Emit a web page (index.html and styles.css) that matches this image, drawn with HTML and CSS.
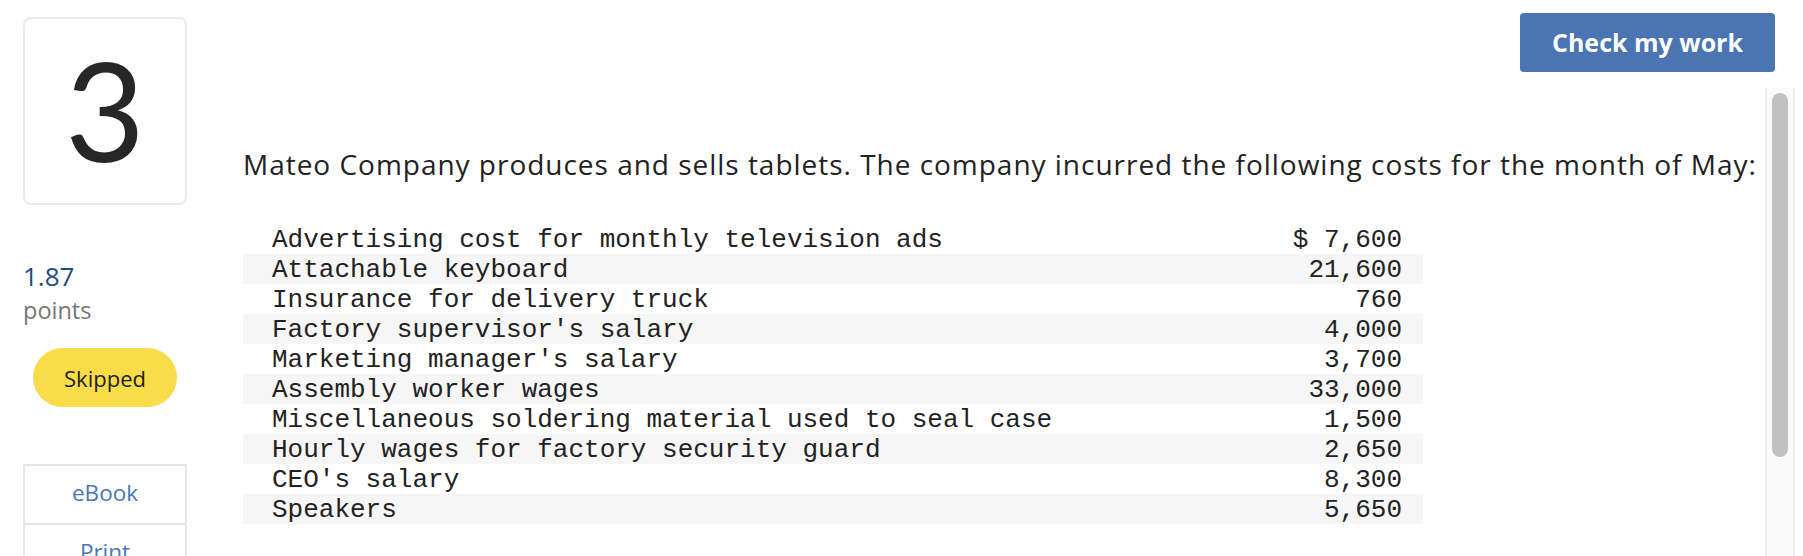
FILE: index.html
```html
<!DOCTYPE html>
<html lang="en">
<head>
<meta charset="utf-8">
<title>Question 3</title>
<link rel="stylesheet" href="styles.css">
</head>
<body>
<div class="page">
  <aside class="sidebar">
    <div class="qnum">3</div>
    <div class="score">1.87</div>
    <div class="points">points</div>
    <div class="status">Skipped</div>
    <nav class="tools">
      <a class="tool">eBook</a>
      <a class="tool">Print</a>
    </nav>
  </aside>
  <main class="main">
    <div class="topbar">
      <button class="check-btn">Check my work</button>
    </div>
    <div class="scroll-area">
      <div class="content">
        <p class="question">Mateo Company produces and sells tablets. The company incurred the following costs for the month of May:</p>
        <table class="costs">
          <tr><td class="label">Advertising cost for monthly television ads</td><td class="amt">$ 7,600</td></tr>
          <tr><td class="label">Attachable keyboard</td><td class="amt">21,600</td></tr>
          <tr><td class="label">Insurance for delivery truck</td><td class="amt">760</td></tr>
          <tr><td class="label">Factory supervisor's salary</td><td class="amt">4,000</td></tr>
          <tr><td class="label">Marketing manager's salary</td><td class="amt">3,700</td></tr>
          <tr><td class="label">Assembly worker wages</td><td class="amt">33,000</td></tr>
          <tr><td class="label">Miscellaneous soldering material used to seal case</td><td class="amt">1,500</td></tr>
          <tr><td class="label">Hourly wages for factory security guard</td><td class="amt">2,650</td></tr>
          <tr><td class="label">CEO's salary</td><td class="amt">8,300</td></tr>
          <tr><td class="label">Speakers</td><td class="amt">5,650</td></tr>
        </table>
      </div>
      <div class="track"><div class="thumb"></div></div>
    </div>
  </main>
</div>
</body>
</html>
```
FILE: styles.css
```css
html, body {
  margin: 0;
  padding: 0;
  background: #ffffff;
  height: 100%;
  overflow: hidden;
}

body {
  font-family: "Open Sans", Lato, sans-serif;
  color: #222222;
}

.page {
  display: flex;
  height: 556px;
  padding-left: 23px;
  overflow: hidden;
}

.sidebar {
  width: 164px;
  flex: none;
  padding-top: 17px;
  overflow: hidden;
}

.qnum {
  box-sizing: border-box;
  height: 188px;
  border: 2px solid #ececec;
  border-radius: 8px;
  display: flex;
  align-items: center;
  justify-content: center;
  font-family: Lato, sans-serif;
  font-size: 138px;
  line-height: 1;
  color: #272727;
  padding-bottom: 4px;
}

.score {
  margin-top: 55px;
  font-size: 26px;
  line-height: 32px;
  color: #1f4a86;
}

.points {
  margin-top: 4px;
  font-size: 23.5px;
  line-height: 28px;
  color: #767676;
}

.status {
  margin: 24px 0 0 10px;
  width: 144px;
  height: 59px;
  border-radius: 30px;
  background: #f8dc4a;
  color: #1f1f1f;
  font-size: 22px;
  display: flex;
  align-items: center;
  justify-content: center;
}

.tools {
  margin-top: 57px;
  display: flex;
  flex-direction: column;
}

.tool {
  box-sizing: border-box;
  height: 61px;
  border: 2px solid #e6e6e6;
  margin-top: -2px;
  padding-bottom: 5px;
  display: flex;
  align-items: center;
  justify-content: center;
  font-size: 22.5px;
  color: #4a76b6;
  text-decoration: none;
}

.tool:first-child {
  margin-top: 0;
}

.main {
  flex: 1;
  display: flex;
  flex-direction: column;
  min-width: 0;
}

.topbar {
  height: 88px;
  flex: none;
  display: flex;
  justify-content: flex-end;
  align-items: flex-start;
  padding-right: 28px;
}

.check-btn {
  margin-top: 13px;
  width: 255px;
  height: 59px;
  border: none;
  border-radius: 4px;
  background: #4a74b2;
  color: #ffffff;
  font-family: "Open Sans", sans-serif;
  font-weight: 700;
  font-size: 25px;
  padding: 0 0 2px 0;
}

.scroll-area {
  flex: 1;
  display: flex;
  min-height: 0;
}

.content {
  flex: 1;
  padding-left: 56px;
  padding-top: 58px;
  min-width: 0;
}

.question {
  margin: 0;
  font-size: 28px;
  letter-spacing: 0.98px;
  line-height: 36px;
  color: #222222;
  white-space: nowrap;
}

.costs {
  margin-top: 42px;
  width: 1180px;
  border-collapse: collapse;
  font-family: "Liberation Mono", "Courier New", monospace;
  font-size: 26px;
  color: #222222;
}

.costs tr {
  height: 30px;
}

.costs tr:nth-child(even) {
  background: #f6f6f6;
}

.costs td {
  padding: 2px 0 0 0;
  line-height: 28px;
  white-space: pre;
}

.costs .label {
  padding-left: 29px;
}

.costs .amt {
  text-align: right;
  padding-right: 21px;
}

.track {
  width: 26px;
  flex: none;
  margin-right: 8px;
  background: #fafafa;
  border-left: 2px solid #ececec;
  border-right: 2px solid #ececec;
  padding-top: 5px;
  display: flex;
  justify-content: center;
}

.thumb {
  width: 16px;
  height: 364px;
  border-radius: 8px;
  background: #c1c1c1;
}
```
